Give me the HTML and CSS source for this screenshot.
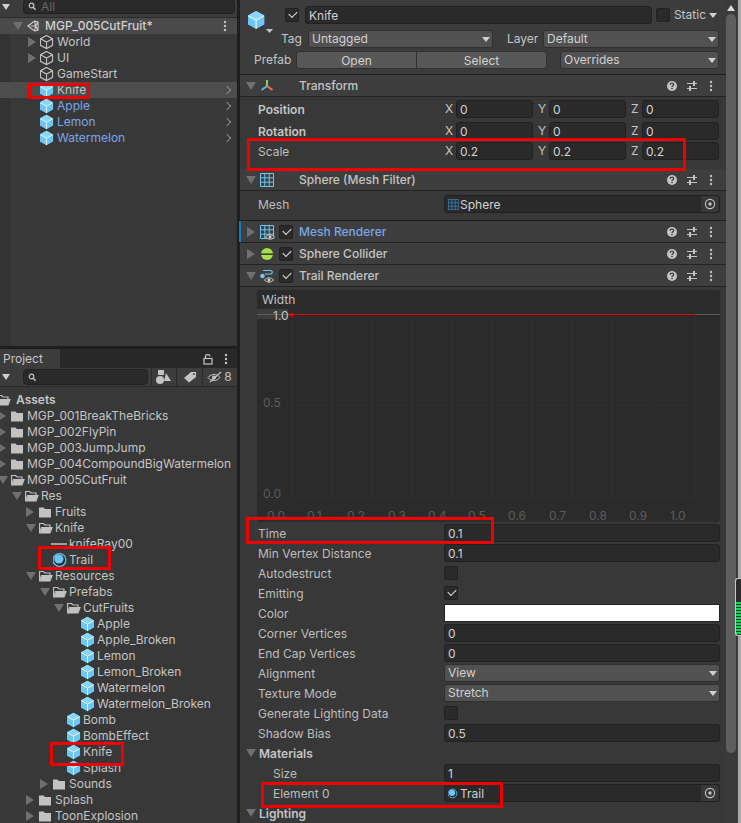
FILE: index.html
```html
<!DOCTYPE html>
<html lang="en">
<head>
    <meta charset="UTF-8">
    <title>Unity Editor</title>
    <link rel="stylesheet" href="styles.css">
</head>
<body>
<svg class="defs" width="0" height="0">
    <symbol id="cube" viewBox="1.5 0 16 16">
        <path d="M8 .8 14.6 4.4V11.6L8 15.2 1.4 11.6V4.4Z" fill="#6cc6f6"/>
        <path d="M8 .8 14.6 4.4 8 8 1.4 4.4Z" fill="#8ad6fb"/>
        <path d="M2 4.8 8 8.2 14 4.8M8 8.2V15" fill="none" stroke="#e4f5ff" stroke-width="1"/>
    </symbol>
    <symbol id="cube-line" viewBox="1.5 0 16 16">
        <path d="M8 1.4 14 4.7V11.3L8 14.6 2 11.3V4.7ZM2 4.7 8 8 14 4.7M8 8V14.6" fill="none" stroke="#c4c4c4" stroke-width="1.1"/>
    </symbol>
    <symbol id="folder" viewBox="2 0 16 16">
        <path d="M2 3.5H6.5L8 5H14V13.5H2Z" fill="#c2c2c2"/>
    </symbol>
    <symbol id="folder-open" viewBox="2 0 16 16">
        <path d="M2.5 13V3.5H6.5L8 5H13V7M2.5 13 4.5 7.5H15L13 13Z" fill="none" stroke="#c2c2c2" stroke-width="1.2"/>
        <path d="M3 13 5 8H14.5L12.7 13Z" fill="#c2c2c2"/>
    </symbol>
    <symbol id="material" viewBox="1.5 0 16 16">
        <circle cx="8" cy="8" r="6.4" fill="#1e2a33" stroke="#6cc6f6" stroke-width="1.2"/>
        <circle cx="7.4" cy="7" r="4.6" fill="#6cc6f6"/>
    </symbol>
    <symbol id="help" viewBox="0 0 12 12">
        <circle cx="6" cy="6" r="5" fill="#c4c4c4"/>
        <path d="M4.3 4.8C4.3 3.7 5 3.2 6 3.2S7.7 3.8 7.7 4.6C7.7 5.8 6 5.7 6 7" fill="none" stroke="#3e3e3e" stroke-width="1.3"/>
        <rect x="5.3" y="7.8" width="1.4" height="1.4" fill="#3e3e3e"/>
    </symbol>
    <symbol id="sliders" viewBox="0 0 12 12">
        <path d="M1 3.5H11M1 8.5H11" stroke="#c4c4c4" stroke-width="1.2"/>
        <path d="M8 1V6M4 6V11" stroke="#c4c4c4" stroke-width="2"/>
    </symbol>
    <symbol id="kebab" viewBox="0 0 4 12">
        <circle cx="2" cy="2" r="1.2" fill="#c4c4c4"/>
        <circle cx="2" cy="6" r="1.2" fill="#c4c4c4"/>
        <circle cx="2" cy="10" r="1.2" fill="#c4c4c4"/>
    </symbol>
    <symbol id="grid" viewBox="0 0 14 14">
        <path d="M.5.5H13.5V13.5H.5ZM4.8.5V13.5M9.2.5V13.5M.5 4.8H13.5M.5 9.2H13.5" fill="none" stroke="#6cc6f6"/>
    </symbol>
    <symbol id="eye" viewBox="0 0 10 6">
        <path d="M.5 3C2.5.2 7.5.2 9.5 3 7.5 5.8 2.5 5.8.5 3Z" fill="#3e3e3e" stroke="#d0d0d0"/>
        <circle cx="5" cy="3" r="1.5" fill="#d0d0d0"/>
    </symbol>
    <symbol id="target" viewBox="0 0 12 12">
        <circle cx="6" cy="6" r="4.6" fill="none" stroke="#c4c4c4" stroke-width="1.1"/>
        <circle cx="6" cy="6" r="1.7" fill="#c4c4c4"/>
    </symbol>
</svg>

<div class="left">
    <section class="hierarchy">
        <div class="hier-bar">
            <i class="tri down pale"></i>
            <div class="search top-search">
                <svg class="glass" width="11" height="9" viewBox="0 0 11 9"><circle cx="3.5" cy="3.5" r="2.3" fill="none" stroke="#c4c4c4" stroke-width="1.2"/><path d="M5.2 5.2 7.6 7.8" stroke="#c4c4c4" stroke-width="1.4"/></svg>
                <span class="all">All</span>
            </div>
        </div>
        <div class="scene-row">
            <i class="tri down"></i>
            <svg class="unity" width="12" height="12" viewBox="0 0 12 12"><path d="M.8 6 7.5 1 11 2V10L7.5 11ZM3.5 6H8.5M7.5 1 8.5 6 7.5 11M10.6 2.4 8.5 6 10.6 9.6" fill="none" stroke="#d0d0d0" stroke-width="1.1"/></svg>
            <span class="scene-name">MGP_005CutFruit*</span>
            <svg class="scene-kebab" width="4" height="12"><use href="#kebab"/></svg>
        </div>
        <div class="hier-list">
            <div class="hrow"><i class="tri right"></i><svg class="ico"><use href="#cube-line"/></svg><span>World</span></div>
            <div class="hrow"><i class="tri right"></i><svg class="ico"><use href="#cube-line"/></svg><span>UI</span></div>
            <div class="hrow"><i class="tri none"></i><svg class="ico"><use href="#cube-line"/></svg><span>GameStart</span></div>
            <div class="hrow hover"><i class="tri none"></i><svg class="ico"><use href="#cube"/></svg><span>Knife</span><b class="chev"></b></div>
            <div class="hrow prefab"><i class="tri none"></i><svg class="ico"><use href="#cube"/></svg><span>Apple</span><b class="chev"></b></div>
            <div class="hrow prefab"><i class="tri none"></i><svg class="ico"><use href="#cube"/></svg><span>Lemon</span><b class="chev"></b></div>
            <div class="hrow prefab"><i class="tri none"></i><svg class="ico"><use href="#cube"/></svg><span>Watermelon</span><b class="chev"></b></div>
        </div>
    </section>

    <section class="project">
        <div class="tabs">
            <div class="tab">Project</div>
            <svg class="lock" width="12" height="12" viewBox="0 0 12 12"><path d="M3.5 5V3.2C3.5 1.2 8 1.2 8 3.2" fill="none" stroke="#c4c4c4" stroke-width="1.2"/><rect x="2" y="5.5" width="8" height="5.5" fill="none" stroke="#c4c4c4" stroke-width="1.2"/></svg>
            <svg class="tab-kebab" width="4" height="12"><use href="#kebab"/></svg>
        </div>
        <div class="proj-bar">
            <i class="tri down pale"></i>
            <div class="search proj-search">
                <svg class="glass" width="11" height="9" viewBox="0 0 11 9"><circle cx="3.5" cy="3.5" r="2.3" fill="none" stroke="#c4c4c4" stroke-width="1.2"/><path d="M5.2 5.2 7.6 7.8" stroke="#c4c4c4" stroke-width="1.4"/></svg>
            </div>
            <div class="tool tool-shapes"><svg width="18" height="14" viewBox="0 0 18 14"><rect x="3" y="0" width="6" height="5" fill="#c4c4c4"/><circle cx="5" cy="10" r="4" fill="#c4c4c4"/><path d="M11 3 16 11H9Z" fill="#c4c4c4"/></svg></div>
            <div class="tool tool-tag"><svg width="14" height="12" viewBox="0 0 14 12"><path d="M1 7 8 1H13V6L6 11.5Z" fill="#c4c4c4"/><circle cx="10.8" cy="3.2" r=".9" fill="#383838"/></svg></div>
            <div class="tool tool-eye"><svg width="16" height="12" viewBox="0 0 16 12"><path d="M1 6.5C4 2.5 10 2.5 13 6.5 10 10.5 4 10.5 1 6.5Z" fill="none" stroke="#c4c4c4"/><circle cx="7" cy="6.5" r="2" fill="#c4c4c4"/><path d="M3 11 14 1" stroke="#c4c4c4" stroke-width="1.2"/></svg><span>8</span></div>
        </div>
        <div class="tree">
            <div class="prow d0"><i class="tri none"></i><svg class="ico"><use href="#folder-open"/></svg><span class="root">Assets</span></div>
            <div class="prow d1"><i class="tri right"></i><svg class="ico"><use href="#folder"/></svg><span>MGP_001BreakTheBricks</span></div>
            <div class="prow d1"><i class="tri right"></i><svg class="ico"><use href="#folder"/></svg><span>MGP_002FlyPin</span></div>
            <div class="prow d1"><i class="tri right"></i><svg class="ico"><use href="#folder"/></svg><span>MGP_003JumpJump</span></div>
            <div class="prow d1"><i class="tri right"></i><svg class="ico"><use href="#folder"/></svg><span>MGP_004CompoundBigWatermelon</span></div>
            <div class="prow d1"><i class="tri down"></i><svg class="ico"><use href="#folder-open"/></svg><span>MGP_005CutFruit</span></div>
            <div class="prow d2"><i class="tri down"></i><svg class="ico"><use href="#folder-open"/></svg><span>Res</span></div>
            <div class="prow d3"><i class="tri right"></i><svg class="ico"><use href="#folder"/></svg><span>Fruits</span></div>
            <div class="prow d3"><i class="tri down"></i><svg class="ico"><use href="#folder-open"/></svg><span>Knife</span></div>
            <div class="prow d4"><i class="tri none"></i><svg class="ico"><path d="M-2 8H14" stroke="#e8e8e8" stroke-width="1.2"/></svg><span>knifeRay00</span></div>
            <div class="prow d4"><i class="tri none"></i><svg class="ico"><use href="#material"/></svg><span>Trail</span></div>
            <div class="prow d3"><i class="tri down"></i><svg class="ico"><use href="#folder-open"/></svg><span>Resources</span></div>
            <div class="prow d4"><i class="tri down"></i><svg class="ico"><use href="#folder-open"/></svg><span>Prefabs</span></div>
            <div class="prow d5"><i class="tri down"></i><svg class="ico"><use href="#folder-open"/></svg><span>CutFruits</span></div>
            <div class="prow d6"><i class="tri none"></i><svg class="ico"><use href="#cube"/></svg><span>Apple</span></div>
            <div class="prow d6"><i class="tri none"></i><svg class="ico"><use href="#cube"/></svg><span>Apple_Broken</span></div>
            <div class="prow d6"><i class="tri none"></i><svg class="ico"><use href="#cube"/></svg><span>Lemon</span></div>
            <div class="prow d6"><i class="tri none"></i><svg class="ico"><use href="#cube"/></svg><span>Lemon_Broken</span></div>
            <div class="prow d6"><i class="tri none"></i><svg class="ico"><use href="#cube"/></svg><span>Watermelon</span></div>
            <div class="prow d6"><i class="tri none"></i><svg class="ico"><use href="#cube"/></svg><span>Watermelon_Broken</span></div>
            <div class="prow d5"><i class="tri none"></i><svg class="ico"><use href="#cube"/></svg><span>Bomb</span></div>
            <div class="prow d5"><i class="tri none"></i><svg class="ico"><use href="#cube"/></svg><span>BombEffect</span></div>
            <div class="prow d5"><i class="tri none"></i><svg class="ico"><use href="#cube"/></svg><span>Knife</span></div>
            <div class="prow d5"><i class="tri none"></i><svg class="ico"><use href="#cube"/></svg><span>Splash</span></div>
            <div class="prow d4"><i class="tri right"></i><svg class="ico"><use href="#folder"/></svg><span>Sounds</span></div>
            <div class="prow d3"><i class="tri right"></i><svg class="ico"><use href="#folder"/></svg><span>Splash</span></div>
            <div class="prow d3"><i class="tri right"></i><svg class="ico"><use href="#folder"/></svg><span>ToonExplosion</span></div>
        </div>
    </section>
</div>

<main class="inspector">
    <header class="obj-head">
        <div class="obj-row obj-name">
            <svg class="obj-icon" width="26" height="26" viewBox="0 0 26 26"><use href="#cube" width="20" height="20" x="2" y="2"/><path d="M20 21H27L23.5 25Z" fill="#c4c4c4"/></svg>
            <span class="check on"></span>
            <div class="field name-field">Knife</div>
            <span class="check static-check"></span>
            <span class="static">Static</span>
            <i class="tri down pale small"></i>
        </div>
        <div class="obj-row obj-tag">
            <span class="tag-label">Tag</span>
            <div class="drop tag-drop">Untagged</div>
            <span class="layer-label">Layer</span>
            <div class="drop layer-drop">Default</div>
        </div>
        <div class="obj-row obj-prefab">
            <span class="prefab-label">Prefab</span>
            <div class="btn btn-open">Open</div>
            <div class="btn btn-select">Select</div>
            <div class="drop overrides">Overrides</div>
        </div>
    </header>

    <div class="comp-head">
        <i class="tri down"></i>
        <svg class="comp-ico" viewBox="0 0 14 14"><path d="M7 7V1" stroke="#8fd14f" stroke-width="2"/><path d="M7 7 1.5 11" stroke="#5fb8f0" stroke-width="2"/><path d="M7 7 12.5 11" stroke="#e8734a" stroke-width="2"/></svg>
        <span class="no-check"></span>
        <span class="comp-title">Transform</span>
        <svg class="act"><use href="#help"/></svg><svg class="act"><use href="#sliders"/></svg><svg class="act-k"><use href="#kebab"/></svg>
    </div>
    <div class="transform">
        <div class="row row-pos"><span class="label bold">Position</span>
            <div class="xyz"><span class="axis">X</span><div class="field">0</div><span class="axis">Y</span><div class="field">0</div><span class="axis">Z</span><div class="field">0</div></div>
        </div>
        <div class="row"><span class="label bold">Rotation</span>
            <div class="xyz"><span class="axis">X</span><div class="field">0</div><span class="axis">Y</span><div class="field">0</div><span class="axis">Z</span><div class="field">0</div></div>
        </div>
        <div class="row"><span class="label">Scale</span>
            <div class="xyz"><span class="axis">X</span><div class="field">0.2</div><span class="axis">Y</span><div class="field">0.2</div><span class="axis">Z</span><div class="field">0.2</div></div>
        </div>
    </div>

    <div class="comp-head">
        <i class="tri down"></i>
        <svg class="comp-ico"><use href="#grid"/></svg>
        <span class="no-check"></span>
        <span class="comp-title">Sphere (Mesh Filter)</span>
        <svg class="act"><use href="#help"/></svg><svg class="act"><use href="#sliders"/></svg><svg class="act-k"><use href="#kebab"/></svg>
    </div>
    <div class="mesh-body">
        <div class="row"><span class="label">Mesh</span>
            <div class="field obj-field"><svg class="field-ico" viewBox="0 0 14 14"><path d="M.5.5H13.5V13.5H.5ZM4.8.5V13.5M9.2.5V13.5M.5 4.8H13.5M.5 9.2H13.5" fill="#24333d" stroke="#3f7ea3"/></svg>Sphere<span class="pick"><svg width="12" height="12"><use href="#target"/></svg></span></div>
        </div>
    </div>

    <div class="comp-head changed">
        <i class="tri right"></i>
        <svg class="comp-ico"><use href="#grid"/><use href="#eye" x="5" y="9" width="10" height="6"/></svg>
        <span class="check on"></span>
        <span class="comp-title blue">Mesh Renderer</span>
        <svg class="act"><use href="#help"/></svg><svg class="act"><use href="#sliders"/></svg><svg class="act-k"><use href="#kebab"/></svg>
    </div>
    <div class="comp-head">
        <i class="tri right"></i>
        <svg class="comp-ico" viewBox="0 0 14 14"><circle cx="7" cy="7" r="6" fill="#a5e048"/><rect x="0" y="6.4" width="14" height="1.6" fill="#3e3e3e"/></svg>
        <span class="check on"></span>
        <span class="comp-title">Sphere Collider</span>
        <svg class="act"><use href="#help"/></svg><svg class="act"><use href="#sliders"/></svg><svg class="act-k"><use href="#kebab"/></svg>
    </div>
    <div class="comp-head">
        <i class="tri down"></i>
        <svg class="comp-ico" viewBox="0 0 14 14"><circle cx="2.5" cy="7" r="2.3" fill="#6cc6f6"/><path d="M3 1.5H10C13 1.5 13 5 10 5H5" fill="none" stroke="#6cc6f6" stroke-width="1.1"/><use href="#eye" x="4" y="8" width="10" height="6"/></svg>
        <span class="check on"></span>
        <span class="comp-title">Trail Renderer</span>
        <svg class="act"><use href="#help"/></svg><svg class="act"><use href="#sliders"/></svg><svg class="act-k"><use href="#kebab"/></svg>
    </div>

    <div class="chart">
        <svg width="463" height="232" viewBox="0 0 463 232">
            <rect x="0" y="19" width="31" height="10" fill="#3d3d3d"/>
            <g fill="#2f2f2f">
                <rect x="34" y="25" width="1" height="182"/><rect x="74" y="25" width="1" height="182"/><rect x="114" y="25" width="1" height="182"/><rect x="154" y="25" width="1" height="182"/><rect x="194" y="25" width="1" height="182"/><rect x="235" y="25" width="1" height="182"/><rect x="275" y="25" width="1" height="182"/><rect x="315" y="25" width="1" height="182"/><rect x="355" y="25" width="1" height="182"/><rect x="396" y="25" width="1" height="182"/><rect x="438" y="25" width="1" height="182"/>
                <rect x="34" y="115" width="404" height="1"/><rect x="34" y="206" width="404" height="1"/>
            </g>
            <rect x="0" y="24" width="463" height="1" fill="#5c5c5c"/>
            <rect x="35" y="24" width="403" height="1" fill="#e80000"/>
            <path d="M35 22.4 37.4 24.8 35 27.2 32.6 24.8Z" fill="#f00000"/>
            <text class="ct" x="5" y="13.5">Width</text>
            <text class="ct" x="16" y="30">1.0</text>
            <text class="ct dim" x="6" y="117">0.5</text>
            <text class="ct dim" x="6" y="208">0.0</text>
            <g class="ct dim">
                <text x="10" y="230">0.0</text><text x="50" y="230">0.1</text><text x="90" y="230">0.2</text><text x="131" y="230">0.3</text><text x="171" y="230">0.4</text><text x="211" y="230">0.5</text><text x="251" y="230">0.6</text><text x="292" y="230">0.7</text><text x="332" y="230">0.8</text><text x="372" y="230">0.9</text><text x="413" y="230">1.0</text>
            </g>
        </svg>
    </div>

    <div class="row"><span class="label">Time</span><div class="field">0.1</div></div>
    <div class="row"><span class="label">Min Vertex Distance</span><div class="field">0.1</div></div>
    <div class="row"><span class="label">Autodestruct</span><span class="check"></span></div>
    <div class="row"><span class="label">Emitting</span><span class="check on"></span></div>
    <div class="row"><span class="label">Color</span><div class="swatch"></div></div>
    <div class="row"><span class="label">Corner Vertices</span><div class="field">0</div></div>
    <div class="row"><span class="label">End Cap Vertices</span><div class="field">0</div></div>
    <div class="row"><span class="label">Alignment</span><div class="drop">View</div></div>
    <div class="row"><span class="label">Texture Mode</span><div class="drop">Stretch</div></div>
    <div class="row"><span class="label">Generate Lighting Data</span><span class="check"></span></div>
    <div class="row"><span class="label">Shadow Bias</span><div class="field">0.5</div></div>
    <div class="row group"><i class="tri down"></i><span class="label bold">Materials</span></div>
    <div class="row sub"><span class="label">Size</span><div class="field">1</div></div>
    <div class="row sub"><span class="label">Element 0</span>
        <div class="field obj-field"><svg class="field-ico"><use href="#material" width="11" height="11"/></svg>Trail<span class="pick"><svg width="12" height="12"><use href="#target"/></svg></span></div>
    </div>
    <div class="row group"><i class="tri down"></i><span class="label bold">Lighting</span></div>
</main>

<div class="scrollbar">
    <i class="tri up"></i>
    <div class="thumb"></div>
</div>
<div class="side-strip"></div>
<div class="meter"></div>

<!-- red marks drawn on the screenshot -->
<div class="mark m-knife"></div>
<div class="mark m-scale"></div>
<div class="mark m-trail"></div>
<div class="mark m-prefab"></div>
<div class="mark m-time"></div>
<div class="mark m-element"></div>
</body>
</html>
```

FILE: styles.css
```css
* {
    box-sizing: border-box;
}
html, body {
    height: 100%;
}
body {
    margin: 0;
    display: flex;
    height: 823px;
    overflow: hidden;
    background: #383838;
    color: #c4c4c4;
    font: 12px/16px Inter, "Liberation Sans", sans-serif;
}
.defs {
    position: absolute;
}

/* triangles */
.tri {
    display: block;
    flex: none;
    width: 0;
    height: 0;
    border-style: solid;
    border-color: transparent;
}
.tri.down {
    border-width: 8px 5px 0;
    border-top-color: #707070;
}
.tri.right {
    border-width: 5px 0 5px 8px;
    border-left-color: #707070;
}
.tri.up {
    border-width: 0 4px 6px;
    border-bottom-color: #d8d8d8;
}
.tri.none {
    border-width: 0;
}
.tri.pale {
    border-width: 6px 4.5px 0;
    border-top-color: #d0d0d0;
}
.tri.small {
    border-width: 5px 4px 0;
}

/* left column */
.left {
    flex: none;
    width: 237px;
    display: flex;
    flex-direction: column;
}
.hierarchy {
    flex: none;
    height: 346px;
    background: linear-gradient(90deg, #333 11px, #383838 0);
}
.hier-bar {
    height: 18px;
    display: flex;
    background: #3c3c3c;
    border-bottom: 1px solid #2a2a2a;
}
.hier-bar .tri {
    margin: 4px 0 0 2px;
}
.search {
    display: flex;
    align-items: center;
    background: #2a2a2a;
    border: 1px solid #212121;
    border-radius: 4px;
}
.top-search {
    width: 212px;
    height: 15px;
    margin: -1px 0 0 13px;
    padding-left: 4px;
}
.all {
    margin-left: 2px;
    color: #666;
}
.scene-row {
    height: 16px;
    display: flex;
    align-items: center;
    background: #4a4a4a;
    padding-left: 13px;
}
.scene-row .unity {
    margin-left: 4px;
}
.scene-name {
    margin-left: 6px;
    font-weight: 500;
    color: #d0d0d0;
}
.scene-kebab {
    margin-left: auto;
    margin-right: 10px;
}
.hrow, .prow {
    height: 16px;
    display: flex;
    align-items: center;
    white-space: nowrap;
}
.hrow {
    padding-left: 28px;
}
.hrow .tri {
    width: 9px;
}
.hrow .ico {
    margin-left: 3px;
    margin-right: 1px;
}
.ico {
    flex: none;
    width: 16px;
    height: 16px;
    overflow: visible;
}
.hrow.hover {
    background: #4d4d4d;
}
.prefab span {
    color: #7ba5e8;
}
.chev {
    width: 6px;
    height: 6px;
    margin: 0 7px 0 auto;
    border-top: 1.5px solid #8a8a8a;
    border-right: 1.5px solid #8a8a8a;
    transform: rotate(45deg);
}

/* project */
.project {
    flex: 1;
    overflow: hidden;
    border-top: 3px solid #1e1e1e;
}
.tabs {
    height: 19px;
    display: flex;
    align-items: center;
    background: #282828;
}
.tab {
    width: 60px;
    height: 19px;
    padding: 2px 0 0 3px;
    background: #3c3c3c;
}
.lock {
    margin-left: 142px;
}
.tab-kebab {
    margin-left: 10px;
}
.proj-bar {
    height: 19px;
    display: flex;
    align-items: center;
    background: #3c3c3c;
    border-bottom: 1px solid #2a2a2a;
    padding-left: 2px;
}
.proj-search {
    width: 125px;
    height: 16px;
    margin-left: 13px;
    padding-left: 4px;
}
.tool {
    height: 18px;
    display: flex;
    align-items: center;
    justify-content: center;
    border-left: 1px solid #2a2a2a;
}
.tool-shapes {
    width: 25px;
    margin-left: 3px;
}
.tool-tag {
    width: 26px;
}
.tool-eye {
    width: 34px;
    gap: 1px;
}
.tree {
    padding-top: 5px;
    margin-left: -16px;
}
.prow .tri {
    width: 13px;
}
.prow .tri.right {
    width: 0;
    margin-right: 5px;
}
.prow .tri.down {
    width: 0;
    margin-right: 3px;
}
.d0 { padding-left: 0; }
.d1 { padding-left: 14px; }
.d2 { padding-left: 28px; }
.d3 { padding-left: 42px; }
.d4 { padding-left: 56px; }
.d5 { padding-left: 70px; }
.d6 { padding-left: 84px; }
.root {
    margin-left: 3px;
    font-weight: 600;
}

/* inspector */
.inspector {
    flex: none;
    width: 489px;
    height: 823px;
    overflow: hidden;
    padding-left: 3px;
    background: linear-gradient(90deg, #1e1e1e 3px, #383838 0);
}
.obj-head {
    height: 75px;
    padding: 6px 7px 0 6px;
    background: #3c3c3c;
    border-bottom: 1px solid #1e1e1e;
}
.obj-row {
    display: flex;
    align-items: center;
    height: 18px;
}
.obj-icon {
    flex: none;
    overflow: visible;
    margin: 2px 0 -10px;
    align-self: flex-start;
}
.obj-name .check {
    margin-left: 13px;
}
.name-field {
    margin-left: 6px;
}
.obj-name .static-check {
    margin-left: 4px;
}
.static {
    margin-left: 4px;
}
.obj-name .tri {
    margin-left: 3px;
    margin-right: 2px;
}
.obj-tag {
    margin-top: 6px;
    padding-left: 35px;
}
.tag-label {
    width: 27px;
    flex: none;
}
.layer-label {
    width: 36px;
    margin-left: 14px;
    flex: none;
}
.obj-prefab {
    margin-top: 3px;
    padding-left: 8px;
}
.prefab-label {
    width: 42px;
    flex: none;
}
.btn {
    flex: none;
    height: 18px;
    line-height: 17px;
    text-align: center;
    background: #585858;
    border: 1px solid #303030;
    color: #d0d0d0;
}
.btn-open {
    width: 121px;
    border-radius: 3px 0 0 3px;
}
.btn-select {
    width: 130px;
    border-left: 0;
    border-radius: 0 3px 3px 0;
}
.field {
    flex: 1;
    min-width: 0;
    height: 18px;
    line-height: 17px;
    padding-left: 3px;
    background: #2a2a2a;
    border: 1px solid #212121;
    border-radius: 3px;
    color: #d2d2d2;
}
.drop {
    position: relative;
    flex: 1;
    height: 18px;
    line-height: 15px;
    padding-left: 3px;
    background: #515151;
    border: 1px solid #303030;
    border-radius: 3px;
    color: #d0d0d0;
}
.drop::after {
    content: "";
    position: absolute;
    top: 6px;
    right: 2px;
    border-style: solid;
    border-width: 5px 4px 0;
    border-color: #d0d0d0 transparent transparent;
}
.tag-drop {
    flex: none;
    width: 185px;
}
.overrides {
    margin-left: 13px;
}
.check {
    position: relative;
    display: block;
    flex: none;
    width: 14px;
    height: 14px;
    background: #2a2a2a;
    border: 1px solid #212121;
    border-radius: 2px;
}
.check.on::after {
    content: "";
    position: absolute;
    left: 3px;
    top: 2px;
    width: 7px;
    height: 4px;
    border-left: 1.6px solid #e8e8e8;
    border-bottom: 1.6px solid #e8e8e8;
    transform: rotate(-45deg);
}
.comp-head {
    position: relative;
    display: flex;
    align-items: center;
    height: 22px;
    padding-left: 6px;
    background: #3e3e3e;
    border-bottom: 1px solid #232323;
}
.comp-head .tri.down {
    margin-right: 4px;
}
.comp-head .tri.right {
    margin-right: 5px;
    margin-left: 1px;
}
.comp-ico {
    flex: none;
    width: 14px;
    height: 14px;
    overflow: visible;
}
.no-check {
    width: 14px;
    margin-left: 5px;
    flex: none;
}
.comp-head .check {
    margin-left: 5px;
}
.comp-title {
    margin-left: 6px;
    padding-top: 1px;
    flex: 1;
    font-weight: 500;
}
.comp-title.blue {
    color: #7ba5e8;
}
.changed::before {
    content: "";
    position: absolute;
    left: -1px;
    top: 0;
    bottom: 0;
    width: 2px;
    background: #0f81be;
}
.act {
    flex: none;
    width: 12px;
    height: 12px;
    margin-right: 8px;
}
.act-k {
    flex: none;
    width: 4px;
    height: 12px;
    margin: 0 13px 0 3px;
}
.row {
    display: flex;
    align-items: center;
    height: 18px;
    margin-bottom: 2px;
    padding: 0 6px 0 18px;
}
.label {
    flex: none;
    width: 186px;
    padding-top: 2px;
    color: #bdbdbd;
    white-space: nowrap;
}
.label.bold {
    font-weight: 600;
    color: #c4c4c4;
}
.transform {
    height: 72px;
    padding-top: 3px;
}
.row-pos {
    margin-bottom: 4px;
}
.xyz {
    flex: 1;
    display: grid;
    grid-template-columns: 11px 77px 16px 77px 16px 77px;
    padding-left: 1px;
}
.xyz .axis {
    line-height: 18px;
}
.xyz .field + .axis {
    margin-left: 5px;
}
.mesh-body {
    height: 30px;
    padding-top: 4px;
    border-bottom: 1px solid #1e1e1e;
}
.obj-field {
    position: relative;
    display: flex;
    align-items: center;
}
.field-ico {
    flex: none;
    width: 11px;
    height: 11px;
    margin-right: 1px;
    margin-left: 0;
}
.pick {
    position: absolute;
    top: 0;
    right: 0;
    bottom: 0;
    width: 18px;
    display: flex;
    align-items: center;
    justify-content: center;
    background: #383838;
    border-radius: 0 3px 3px 0;
}
.chart {
    width: 463px;
    height: 232px;
    margin: 3px 0 2px 17px;
    background: #2b2b2b;
    border-radius: 3px;
    overflow: hidden;
}
.chart svg {
    display: block;
}
.ct {
    font: 12px Inter, "Liberation Sans", sans-serif;
    fill: #c4c4c4;
}
.ct.dim {
    fill: #5c5c5c;
}
.swatch {
    flex: 1;
    height: 18px;
    background: #fff;
    border: 1px solid #232323;
}
.group {
    padding-left: 6px;
}
.group .tri {
    margin-right: 3px;
}
.group .label {
    width: auto;
}
.sub {
    padding-left: 33px;
}
.sub .label {
    width: 171px;
}

/* right edge */
.scrollbar {
    flex: none;
    width: 12px;
    height: 823px;
    padding-top: 5px;
    background: #3a3a3a;
}
.scrollbar .tri {
    margin-left: 1px;
}
.thumb {
    width: 10px;
    height: 739px;
    margin-top: 3px;
    background: #5e5e5e;
    border-radius: 5px;
}
.side-strip {
    flex: none;
    width: 3px;
    height: 823px;
    background: #a8a8a8;
}
.meter {
    position: absolute;
    left: 735px;
    top: 578px;
    width: 6px;
    height: 58px;
    background:
        repeating-linear-gradient(#19d35f 0 2px, #1a3f28 0 3px) 0 23px / 100% 34px no-repeat,
        #2c2c2c;
    border: 1px solid #c8c8c8;
    border-right: 0;
    border-radius: 3px 0 0 3px;
}

/* annotations */
.mark {
    position: absolute;
    border: 3px solid #f00000;
}
.m-knife {
    left: 28px;
    top: 83px;
    width: 62px;
    height: 16px;
}
.m-scale {
    left: 247px;
    top: 138px;
    width: 439px;
    height: 33px;
}
.m-trail {
    left: 38px;
    top: 546px;
    width: 73px;
    height: 24px;
}
.m-prefab {
    left: 50px;
    top: 742px;
    width: 74px;
    height: 24px;
}
.m-time {
    left: 246px;
    top: 517px;
    width: 248px;
    height: 27px;
}
.m-element {
    left: 261px;
    top: 782px;
    width: 242px;
    height: 26px;
}
```
